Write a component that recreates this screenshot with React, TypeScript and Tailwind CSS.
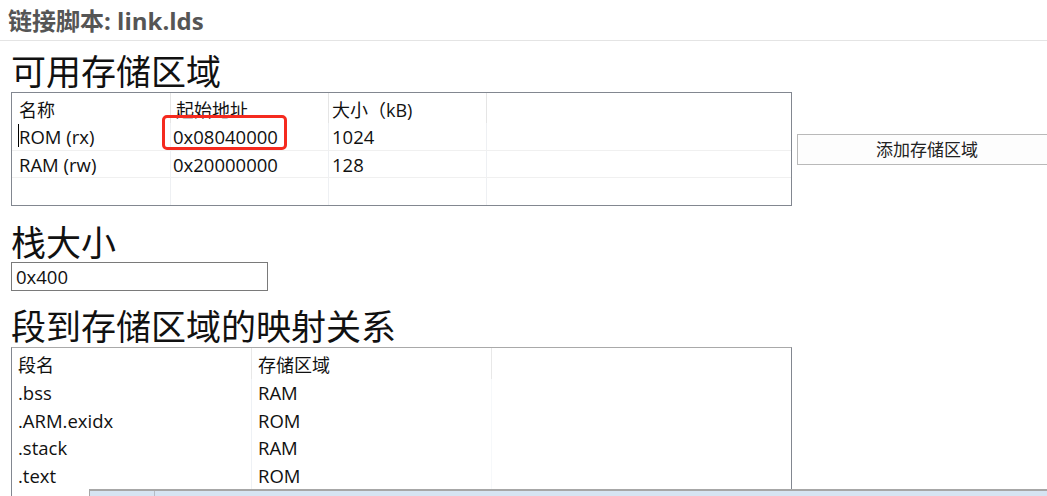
import React from "react";

const FONT = "font-['Open_Sans','Noto_Sans_CJK_SC',sans-serif]";

function App() {
  const mem = [
    { name: "ROM (rx)", addr: "0x08040000", size: "1024", caret: true },
    { name: "RAM (rw)", addr: "0x20000000", size: "128", caret: false },
    { name: "", addr: "", size: "", caret: false },
  ];
  const sections = [
    [".bss", "RAM"],
    [".ARM.exidx", "ROM"],
    [".stack", "RAM"],
    [".text", "ROM"],
  ];
  return (
    <div className={`relative w-[1047px] h-[496px] overflow-hidden bg-white text-[#111] ${FONT}`}>
      {/* title */}
      <div className="h-[41px] border-b border-[#e4e4e4] pl-[8px] flex items-center">
        <span className="text-[24px] font-bold text-[#555555] leading-none pt-[1px]">链接脚本: link.lds</span>
      </div>

      {/* heading 1 */}
      <div className="h-[51px] pt-[7px] pl-[11px]">
        <div className="text-[35px] leading-[44px] font-['Noto_Sans_CJK_SC',sans-serif] text-[#111]">可用存储区域</div>
      </div>

      {/* table 1 + button */}
      <div className="flex items-start pl-[11px]">
        <div className="w-[781px] h-[114px] shrink-0 border border-[#828790] flex flex-col text-[18.5px]">
          <div className="flex h-[30px] shrink-0">
            <div className="w-[159px] border-r border-[#e5e5e5] pl-[7px] leading-[30px] pt-[2px] text-[18px]">名称</div>
            <div className="w-[158px] border-r border-[#e5e5e5] pl-[5px] leading-[30px] pt-[2px] text-[18px]">起始地址</div>
            <div className="w-[158px] border-r border-[#e5e5e5] pl-[3px] leading-[30px] pt-[2px] text-[18px]">大小（kB)</div>
            <div className="flex-1" />
          </div>
          {mem.map((r, i) => (
            <div
              key={i}
              className={`flex shrink-0 ${i === 0 ? "h-[28px]" : "h-[27px]"} ${i < 2 ? "border-b border-[#f0f0f0]" : ""}`}
            >
              <div className="relative w-[159px] border-r border-[#eef0f3] pl-[7px] leading-[27px]">
                {r.caret && <span className="absolute left-[6px] top-[1px] w-[1px] h-[23px] bg-black" />}
                {r.name}
              </div>
              <div className="w-[158px] border-r border-[#eef0f3] pl-[2px] leading-[27px]">{r.addr}</div>
              <div className="w-[158px] border-r border-[#eef0f3] pl-[3px] leading-[27px]">{r.size}</div>
              <div className="flex-1" />
            </div>
          ))}
        </div>
        <button className="ml-[5px] mt-[42px] w-[258px] h-[31px] shrink-0 border border-[#b9b9b9] bg-[#fdfdfd] text-[17px] text-[#222] leading-none flex items-center justify-center pl-[2px]">
          添加存储区域
        </button>
      </div>

      {/* heading 2 */}
      <div className="h-[56px] pt-[14px] pl-[11px]">
        <div className="text-[35px] leading-[42px] font-['Noto_Sans_CJK_SC',sans-serif] text-[#111]">栈大小</div>
      </div>
      <div className="pl-[11px]">
        <div className="w-[257px] h-[29px] border border-[#7a7a7a] pl-[4px] text-[18.5px] leading-[27px]">0x400</div>
      </div>

      {/* heading 3 */}
      <div className="h-[56px] pt-[13px] pl-[11px]">
        <div className="text-[35px] leading-[42px] font-['Noto_Sans_CJK_SC',sans-serif] text-[#111]">段到存储区域的映射关系</div>
      </div>

      {/* table 2 */}
      <div className="pl-[11px]">
        <div className="w-[781px] h-[170px] border border-[#828790] border-t-[#a9a9a9] flex flex-col text-[18.5px]">
          <div className="flex h-[31px] shrink-0">
            <div className="w-[240px] border-r border-[#e8e8e8] pl-[6px] pt-[4px] leading-[27px] text-[18px]">段名</div>
            <div className="w-[240px] border-r border-[#e8e8e8] pl-[6px] pt-[4px] leading-[27px] text-[18px]">存储区域</div>
            <div className="flex-1" />
          </div>
          {sections.map(([a, b], i) => (
            <div key={i} className="flex h-[27.7px] shrink-0">
              <div className="w-[240px] border-r border-[#eef1f5] pl-[6px] leading-[27.7px]">{a}</div>
              <div className="w-[240px] border-r border-[#f6f8fa] pl-[6px] leading-[27.7px]">{b}</div>
              <div className="flex-1" />
            </div>
          ))}
          <div className="flex flex-1">
            <div className="w-[240px] border-r border-[#eef1f5]" />
            <div className="w-[240px] border-r border-[#f6f8fa]" />
            <div className="flex-1" />
          </div>
        </div>
      </div>

      {/* red annotation box */}
      <div className="absolute left-[162px] top-[115px] w-[125px] h-[35px] border-[3.5px] border-[#f52a1f] rounded-[5px]" />

      {/* bottom overlapping panel */}
      <div className="absolute left-[89px] top-[489px] right-0 h-[20px] bg-[#d6e4f2] border-t-2 border-l border-[#a7a7a7] flex">
        <div className="w-[65px] border-r border-[#b5bcc5]" />
      </div>
    </div>
  );
}

export default App;
